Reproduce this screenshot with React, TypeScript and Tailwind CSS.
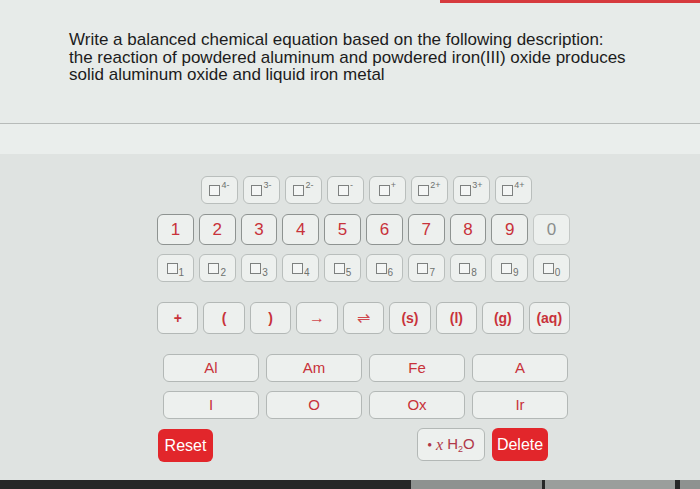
import type { ReactNode } from "react";

const SUPERS = ["4-", "3-", "2-", "-", "+", "2+", "3+", "4+"];
const NUMBERS = ["1", "2", "3", "4", "5", "6", "7", "8", "9", "0"];
const SUBS = ["1", "2", "3", "4", "5", "6", "7", "8", "9", "0"];
const SYMBOLS = ["+", "(", ")", "→", "⇌", "(s)", "(l)", "(g)", "(aq)"];
const ELEMENTS = [
  ["Al", "Am", "Fe", "A"],
  ["I", "O", "Ox", "Ir"],
];

function Box() {
  return <span className="inline-block w-[11px] h-[11px] border border-[#7d807f] bg-[#f4f6f5]" />;
}

function Key({ children, className = "" }: { children: ReactNode; className?: string }) {
  return (
    <button className={`flex items-center justify-center rounded-[6px] border bg-[#edf0ee] ${className}`}>
      {children}
    </button>
  );
}

export default function App() {
  return (
    <div
      className="w-[700px] h-[489px] flex flex-col bg-[#e7ebe9] overflow-hidden"
      style={{ fontFamily: '"Liberation Sans", Arial, sans-serif' }}
    >
      {/* question */}
      <div className="relative h-[124px] border-b border-[#b7bbb9] pl-[69px] pt-[31px]">
        <div className="absolute top-0 right-0 w-[260px] h-[3px] bg-[#d63a3e]" />
        <p className="text-[17px] leading-[17.5px] text-[#1c1c1c]">
          Write a balanced chemical equation based on the following description:
          <br />
          the reaction of powdered aluminum and powdered iron(III) oxide produces
          <br />
          solid aluminum oxide and liquid iron metal
        </p>
      </div>
      <div className="h-[30px] bg-[#eaeeec]" />

      {/* keypad */}
      <div className="flex-1 bg-[#dfe3e1] pt-[22px]">
        <div className="w-[413px] ml-[157px] flex flex-col">
          <div className="flex justify-center gap-[5px] pl-[6px]">
            {SUPERS.map((s) => (
              <Key key={s} className="w-[37px] h-[28px] border-[#b9bebc]">
                <Box />
                <span className="text-[9px] leading-none -mt-[9px] ml-[1px] text-[#6e7270]">{s}</span>
              </Key>
            ))}
          </div>

          <div className="grid grid-cols-10 gap-[5px] mt-[10px]">
            {NUMBERS.map((n) => (
              <Key
                key={n}
                className={`h-[31px] text-[17px] ${
                  n === "0" ? "border-[#c4c8c6]" : "border-[#8e9391] border-[1.5px]"
                }`}
              >
                <span className={n === "0" ? "text-[#8a8e8c]" : "text-[#c8323a]"}>{n}</span>
              </Key>
            ))}
          </div>

          <div className="grid grid-cols-10 gap-[5px] mt-[9px]">
            {SUBS.map((n) => (
              <Key key={n} className="h-[28px] border-[#b9bebc]">
                <Box />
                <span className="text-[10px] leading-none mt-[9px] ml-[1px] text-[#6e7270]">{n}</span>
              </Key>
            ))}
          </div>

          <div className="grid grid-cols-9 gap-[5px] mt-[20px]">
            {SYMBOLS.map((s) => (
              <Key key={s} className="h-[32px] border-[#b3b8b6]">
                <span
                  className={
                    s === "⇌" || s === "→"
                      ? "text-[16px] text-[#d0484e]"
                      : "text-[14px] font-semibold text-[#c8323a]"
                  }
                >
                  {s}
                </span>
              </Key>
            ))}
          </div>

          <div className="flex flex-col gap-[9px] mt-[20px] pl-[6px] pr-[2px]">
            {ELEMENTS.map((row, i) => (
              <div key={i} className="grid grid-cols-4 gap-[7px]">
                {row.map((el) => (
                  <Key key={el} className="h-[28px] border-[#b3b8b6]">
                    <span className="text-[15px] text-[#c8323a]">{el}</span>
                  </Key>
                ))}
              </div>
            ))}
          </div>

          <div className="flex items-start mt-[9px] pl-[1px]">
            <button className="w-[55px] h-[33px] rounded-[6px] bg-[#e2262b] text-white text-[16px] mt-[1px]">
              Reset
            </button>
            <div className="flex-1" />
            <button className="w-[68px] h-[33px] rounded-[6px] border border-[#b3b8b6] bg-[#edf0ee] text-[#b0384a] flex items-center justify-center text-[15px]">
              <span className="text-[8px] mr-[4px]">●</span>
              <span className="italic mr-[4px] text-[16px]" style={{ fontFamily: '"Liberation Serif", serif' }}>
                x
              </span>
              <span>H</span>
              <span className="text-[9px] mt-[10px]">2</span>
              <span>O</span>
            </button>
            <button className="w-[56px] h-[33px] rounded-[6px] bg-[#e2262b] text-white text-[16px] ml-[7px] mr-[22px]">
              Delete
            </button>
          </div>
        </div>
      </div>

      {/* bottom strip */}
      <div className="h-[9px] flex bg-[#262727]">
        <div className="w-[411px]" />
        <div className="w-[131px] bg-[#8e9290]" />
        <div className="w-[3px]" />
        <div className="w-[130px] bg-[#9a9e9c]" />
        <div className="w-[5px]" />
        <div className="flex-1 bg-[#8e9290]" />
      </div>
    </div>
  );
}
